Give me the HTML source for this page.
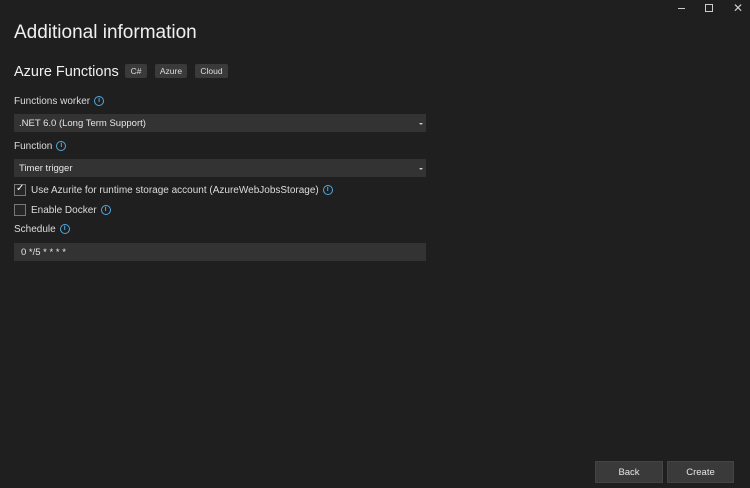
<!DOCTYPE html><html><head><style>
body{margin:0;width:750px;height:488px;background:#1f1f1f;font-family:"Liberation Sans",sans-serif;color:#e6e6e6;position:relative;overflow:hidden}
.a{position:absolute}
.lbl{font-size:10px;color:#dcdcdc}
.tag{position:absolute;top:64px;height:14px;background:#3a3a3a;border-radius:2px;font-size:8.5px;line-height:15px;text-align:center;color:#ddd}
.fld{position:absolute;left:14px;width:412px;background:#333;font-size:9.5px;line-height:20px;color:#e6e6e6;padding-left:5px;box-sizing:border-box}
.i{display:inline-block;width:8px;height:8px;border:1px solid #4fa9e0;border-radius:50%;color:#4fa9e0;font-size:7px;line-height:8px;text-align:center;vertical-align:middle;margin-left:4px;font-weight:bold}
.arr{position:absolute;right:3px;top:9px;width:0;height:0;border-left:2px solid transparent;border-right:2px solid transparent;border-top:2px solid #ccc}
.cb{position:absolute;left:14px;width:12px;height:12px;border:1px solid #777;box-sizing:border-box;background:#262626}
.btn{position:absolute;top:461px;height:22px;background:#3a3a3a;border:1px solid #444;box-sizing:border-box;font-size:9.5px;line-height:22px;text-align:center;color:#e6e6e6}
</style></head><body>
<div class="a" style="left:678px;top:8px;width:7px;border-top:1px solid #ccc"></div>
<div class="a" style="left:705px;top:4px;width:6px;height:6px;border:1px solid #ccc"></div>
<div class="a" style="left:733px;top:1px;font-size:12px;color:#ccc">✕</div>
<div class="a" style="left:14px;top:22px;font-size:19px;color:#f0f0f0">Additional information</div>
<div class="a" style="left:14px;top:64px;font-size:14.5px;color:#f0f0f0">Azure Functions</div>
<div class="tag" style="left:125px;width:22px">C#</div>
<div class="tag" style="left:155px;width:32px">Azure</div>
<div class="tag" style="left:195px;width:33px">Cloud</div>
<div class="a lbl" style="left:14px;top:96px">Functions worker<span class="i">i</span></div>
<div class="fld" style="top:114px;height:18px">.NET 6.0 (Long Term Support)<div class="arr"></div></div>
<div class="a lbl" style="left:14px;top:141px">Function<span class="i">i</span></div>
<div class="fld" style="top:159px;height:18px">Timer trigger<div class="arr"></div></div>
<div class="cb" style="top:184px"><span style="position:absolute;left:1px;top:-2px;font-size:10px;color:#fff">✓</span></div>
<div class="a lbl" style="left:31px;top:185px">Use Azurite for runtime storage account (AzureWebJobsStorage)<span class="i">i</span></div>
<div class="cb" style="top:204px"></div>
<div class="a lbl" style="left:31px;top:205px">Enable Docker<span class="i">i</span></div>
<div class="a lbl" style="left:14px;top:224px">Schedule<span class="i">i</span></div>
<div class="fld" style="top:243px;height:18px;padding-left:7px">0 */5 * * * *</div>
<div class="btn" style="left:595px;width:68px">Back</div>
<div class="btn" style="left:667px;width:67px">Create</div>
</body></html>
